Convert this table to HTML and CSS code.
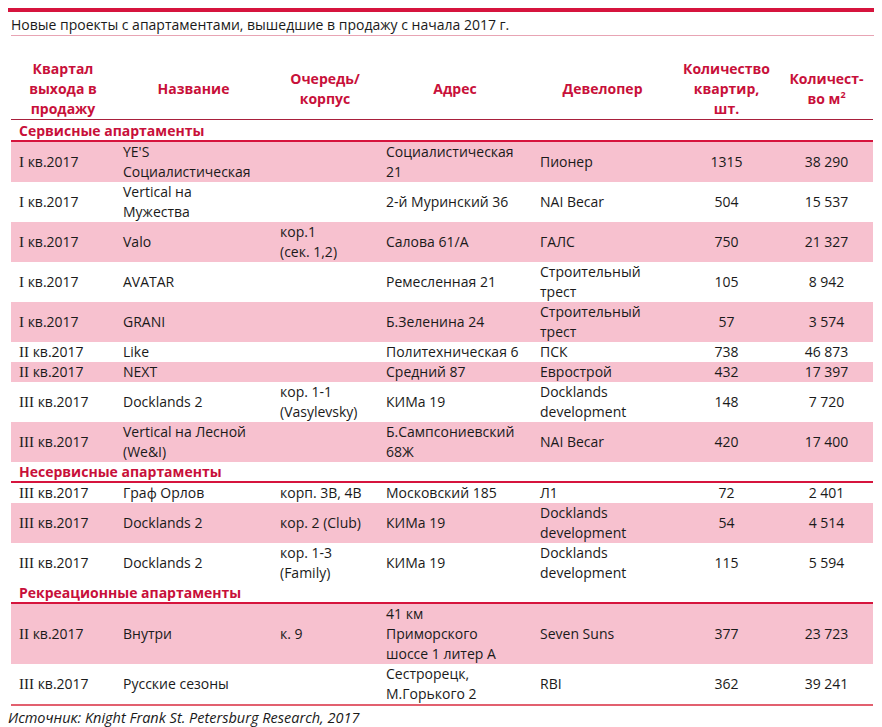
FILE: index.html
```html
<!DOCTYPE html>
<html lang="ru">
<head>
<meta charset="utf-8">
<link rel="stylesheet" href="styles.css">
</head>
<body>
<div class="page">
  <div class="topbar"></div>
  <div class="title">Новые проекты с апартаментами, вышедшие в продажу с начала 2017 г.</div>
  <table class="tbl">
    <colgroup>
      <col class="c1"><col class="c2"><col class="c3"><col class="c4"><col class="c5"><col class="c6"><col class="c7">
    </colgroup>
    <thead>
      <tr>
        <th>Квартал<br>выхода в<br>продажу</th>
        <th>Название</th>
        <th>Очередь/<br>корпус</th>
        <th>Адрес</th>
        <th>Девелопер</th>
        <th>Количество<br>квартир,<br>шт.</th>
        <th>Количест-<br>во м<sup>2</sup></th>
      </tr>
    </thead>
    <tbody>
      <tr class="sec first"><td colspan="7">Сервисные апартаменты</td></tr>
      <tr class="pink"><td><span class="rn">I</span> кв.2017</td><td>YE'S<br>Социалистическая</td><td></td><td>Социалистическая<br>21</td><td>Пионер</td><td class="num">1315</td><td class="num">38 290</td></tr>
      <tr><td><span class="rn">I</span> кв.2017</td><td>Vertical на<br>Мужества</td><td></td><td>2-й Муринский 36</td><td>NAI Becar</td><td class="num">504</td><td class="num">15 537</td></tr>
      <tr class="pink"><td><span class="rn">I</span> кв.2017</td><td>Valo</td><td>кор.1<br>(сек. 1,2)</td><td>Салова 61/А</td><td>ГАЛС</td><td class="num">750</td><td class="num">21 327</td></tr>
      <tr><td><span class="rn">I</span> кв.2017</td><td>AVATAR</td><td></td><td>Ремесленная 21</td><td>Строительный<br>трест</td><td class="num">105</td><td class="num">8 942</td></tr>
      <tr class="pink"><td><span class="rn">I</span> кв.2017</td><td>GRANI</td><td></td><td>Б.Зеленина 24</td><td>Строительный<br>трест</td><td class="num">57</td><td class="num">3 574</td></tr>
      <tr><td><span class="rn">II</span> кв.2017</td><td>Like</td><td></td><td>Политехническая 6</td><td>ПСК</td><td class="num">738</td><td class="num">46 873</td></tr>
      <tr class="pink"><td><span class="rn">II</span> кв.2017</td><td>NEXT</td><td></td><td>Средний 87</td><td>Еврострой</td><td class="num">432</td><td class="num">17 397</td></tr>
      <tr><td><span class="rn">III</span> кв.2017</td><td>Docklands 2</td><td>кор. 1-1<br>(Vasylevsky)</td><td>КИМа 19</td><td>Docklands<br>development</td><td class="num">148</td><td class="num">7 720</td></tr>
      <tr class="pink"><td><span class="rn">III</span> кв.2017</td><td>Vertical на Лесной<br>(We&amp;I)</td><td></td><td>Б.Сампсониевский<br>68Ж</td><td>NAI Becar</td><td class="num">420</td><td class="num">17 400</td></tr>
      <tr class="sec"><td colspan="7">Несервисные апартаменты</td></tr>
      <tr><td><span class="rn">III</span> кв.2017</td><td>Граф Орлов</td><td>корп. 3В, 4В</td><td>Московский 185</td><td>Л1</td><td class="num">72</td><td class="num">2 401</td></tr>
      <tr class="pink"><td><span class="rn">III</span> кв.2017</td><td>Docklands 2</td><td>кор. 2 (Club)</td><td>КИМа 19</td><td>Docklands<br>development</td><td class="num">54</td><td class="num">4 514</td></tr>
      <tr><td><span class="rn">III</span> кв.2017</td><td>Docklands 2</td><td>кор. 1-3<br>(Family)</td><td>КИМа 19</td><td>Docklands<br>development</td><td class="num">115</td><td class="num">5 594</td></tr>
      <tr class="sec"><td colspan="7">Рекреационные апартаменты</td></tr>
      <tr class="pink"><td><span class="rn">II</span> кв.2017</td><td>Внутри</td><td>к. 9</td><td>41 км<br>Приморского<br>шоссе 1 литер А</td><td>Seven Suns</td><td class="num">377</td><td class="num">23 723</td></tr>
      <tr class="last"><td><span class="rn">III</span> кв.2017</td><td>Русские сезоны</td><td></td><td>Сестрорецк,<br>М.Горького 2</td><td>RBI</td><td class="num">362</td><td class="num">39 241</td></tr>
    </tbody>
  </table>
  <div class="source">Источник: Knight Frank St. Petersburg Research, 2017</div>
</div>
</body>
</html>
```
FILE: styles.css
```css
html, body {
  margin: 0;
  padding: 0;
  background: #ffffff;
}
.page {
  padding: 8px 8px 0 8px;
  font-family: "Open Sans", "Noto Sans", sans-serif;
  font-size: 14px;
  color: #1a1a1a;
}
.topbar {
  height: 4px;
  background: #d6143d;
}
.title {
  margin-left: 3px;
  padding-top: 3px;
  height: 20px;
  line-height: 20px;
  border-bottom: 1px solid #e8a4b4;
  font-size: 14px;
}
.tbl {
  margin-top: 23px;
  margin-left: 3px;
  width: 862px;
  border-collapse: collapse;
  table-layout: fixed;
}
.c1 { width: 104px; }
.c2 { width: 157px; }
.c3 { width: 106px; }
.c4 { width: 154px; }
.c5 { width: 141px; }
.c6 { width: 107px; }
.c7 { width: 93px; }
.tbl th {
  font-weight: 700;
  color: #c8103a;
  line-height: 20px;
  height: 60px;
  text-align: center;
  vertical-align: middle;
  padding: 0 4px;
  border-bottom: 1px solid #a8203c;
}
.tbl th sup {
  font-size: 9px;
  line-height: 0;
  vertical-align: 6px;
}
.tbl td {
  line-height: 20px;
  padding: 0 8px;
  vertical-align: middle;
  white-space: nowrap;
}
.tbl td.num {
  text-align: center;
}
.tbl tr.pink td {
  background: #f7c1cf;
}
.tbl tr.sec td {
  font-weight: 700;
  color: #c8103a;
  line-height: 19px;
  padding-top: 0;
  border-bottom: 2px solid #d6143d;
}
.tbl tr.sec.first td {
  padding-top: 1px;
}
.tbl tr.last td {
  border-bottom: 2px solid #e2606f;
}
.rn {
  font-family: "Liberation Serif", serif;
  font-size: 15px;
  line-height: 12px;
}
.source {
  margin-top: 3px;
  font-style: italic;
  font-size: 14.5px;
  line-height: 18px;
}
```
